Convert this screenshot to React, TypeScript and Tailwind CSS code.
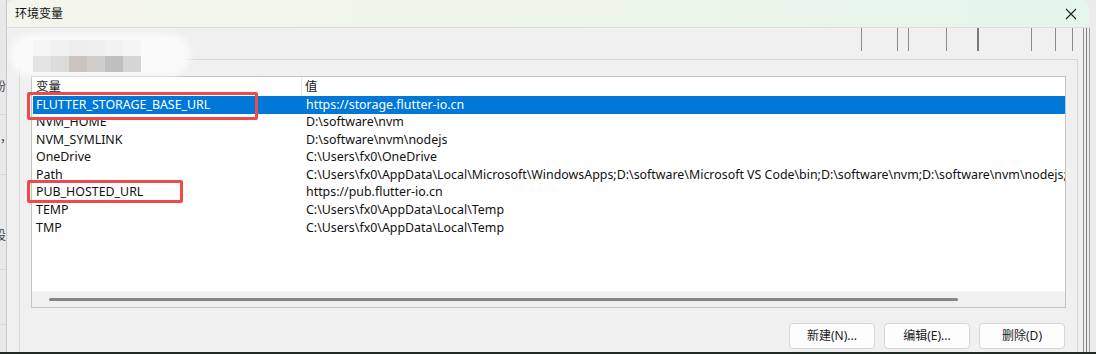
const rows = [
  { name: "FLUTTER_STORAGE_BASE_URL", value: "https://storage.flutter-io.cn", selected: true },
  { name: "NVM_HOME", value: "D:\\software\\nvm" },
  { name: "NVM_SYMLINK", value: "D:\\software\\nvm\\nodejs" },
  { name: "OneDrive", value: "C:\\Users\\fx0\\OneDrive" },
  {
    name: "Path",
    value:
      "C:\\Users\\fx0\\AppData\\Local\\Microsoft\\WindowsApps;D:\\software\\Microsoft VS Code\\bin;D:\\software\\nvm;D:\\software\\nvm\\nodejs;D:\\software\\flutter\\bin",
  },
  { name: "PUB_HOSTED_URL", value: "https://pub.flutter-io.cn" },
  { name: "TEMP", value: "C:\\Users\\fx0\\AppData\\Local\\Temp" },
  { name: "TMP", value: "C:\\Users\\fx0\\AppData\\Local\\Temp" },
];

const mosaic = [
  ["#f6f6f6", "#f1f1f1", "#eeeeee", "#efefef", "#f2f2f2", "#f5f5f5"],
  ["#e4e4e4", "#dcdcdc", "#cbc4c0", "#d1cdcb", "#bfbfc0", "#d6d6d8"],
];

function Button({ label }: { label: string }) {
  return (
    <button className="w-[86px] h-[26px] rounded-[4px] border border-[#d6d6d6] bg-[#fdfdfd] text-[12px] text-[#1b1b1b] flex items-center justify-center">
      {label}
    </button>
  );
}

export default function App() {
  return (
    <div
      className="w-[1096px] h-[354px] overflow-hidden bg-[#ebebeb] flex flex-col relative text-black"
      style={{ fontFamily: '"Noto Sans", "Noto Sans CJK SC", sans-serif' }}
    >
      <div className="flex flex-1 min-h-0">
        {/* background window on the left */}
        <div className="w-[7px] shrink-0 bg-[#e8e8e8] flex flex-col overflow-hidden border-r border-[#c9c9c9]">
          <div className="h-[115px] border-b border-[#d8d8d8] relative">
            <span className="absolute left-[-6px] top-[78px] text-[12px] text-[#444]">纷</span>
          </div>
          <div className="h-[60px] border-b border-[#d8d8d8] relative">
            <span className="absolute left-[0px] top-[14px] text-[12px] text-[#444]">，</span>
          </div>
          <div className="h-[95px] border-b border-[#d8d8d8] relative">
            <span className="absolute left-[-6px] top-[52px] text-[12px] text-[#444]">设</span>
          </div>
          <div className="h-[55px] border-b border-[#d8d8d8]" />
        </div>

        {/* dialog */}
        <div className="w-[1082px] shrink-0 flex flex-col rounded-t-[8px] overflow-hidden bg-[#f0f0f0]">
          <div className="h-[28px] shrink-0 flex items-center justify-between pl-[8px] pr-[10px] bg-gradient-to-r from-[#f4f5ee] via-[#eef5ea] to-[#e5f6ec] border-b border-[#dcdcdc]">
            <span className="text-[12px] text-[#111]">环境变量</span>
            <svg width="12" height="12" viewBox="0 0 12 12" className="mr-[2px]">
              <path d="M1 1L11 11M11 1L1 11" stroke="#222" strokeWidth="1.1" fill="none" />
            </svg>
          </div>

          <div className="flex flex-1 min-h-0">
            <div className="w-[1071px] shrink-0 flex flex-col relative">
              {/* remnants of upper table */}
              <div className="h-[31px] shrink-0 flex items-start pl-[854px]">
                <div className="w-px h-[23px] bg-[#8c8c8c]" />
                <div className="w-px h-[23px] bg-[#8c8c8c] ml-[35px]" />
                <div className="w-px h-[23px] bg-[#8c8c8c] ml-[10px]" />
                <div className="w-px h-[23px] bg-[#8c8c8c] ml-[37px]" />
                <div className="w-[2px] h-[23px] bg-[#7a7a7a] ml-[30px]" />
                <div className="w-px h-[23px] bg-[#8c8c8c] ml-[52px]" />
                <div className="w-px h-[23px] bg-[#8c8c8c] ml-[23px]" />
                <div className="w-px h-[23px] bg-[#8c8c8c] ml-[16px]" />
              </div>

              {/* group box */}
              <div className="flex-1 ml-[12px] border-t border-r border-l border-[#dadada] pt-[16px] pl-[11px] pr-[11px] flex flex-col">
                <div className="h-[232px] border border-[#c4c4c4] bg-white flex flex-col overflow-hidden">
                  <div className="h-[19px] shrink-0 flex text-[12.4px] text-[#222] leading-[19px]">
                    <div className="w-[270px] pl-[4px] border-r border-[#e5e5e5]">变量</div>
                    <div className="pl-[3px]">值</div>
                  </div>
                  <div className="flex-1 flex flex-col">
                    {rows.map((r) => (
                      <div
                        key={r.name}
                        className={
                          r.selected
                            ? "h-[17.6px] flex items-center text-[12.4px] whitespace-nowrap bg-[#0078d7] text-white ml-px"
                            : "h-[17.6px] flex items-center text-[12.4px] whitespace-nowrap text-[#111]"
                        }
                      >
                        <div className={r.selected ? "w-[269px] pl-[3px] shrink-0" : "w-[270px] pl-[4px] shrink-0"}>{r.name}</div>
                        <div className="pl-[4px] overflow-hidden">{r.value}</div>
                      </div>
                    ))}
                  </div>
                  <div className="h-[16px] shrink-0 bg-[#f0f0f0] flex items-center pl-[17px]">
                    <div className="w-[909px] h-[3px] rounded-full bg-[#868686]" />
                  </div>
                </div>

                <div className="flex justify-end gap-[9px] mt-[15px] mr-[1px]">
                  <Button label="新建(N)..." />
                  <Button label="编辑(E)..." />
                  <Button label="删除(D)" />
                </div>
              </div>

              {/* redacted (mosaic) area */}
              <div className="absolute left-[3px] top-[6px] w-[180px] h-[42px] rounded-[20px] bg-[#fafafa] blur-[3px]" />
              <div className="absolute left-[26px] top-[12px] flex flex-col blur-[0.5px]">
                {mosaic.map((line, i) => (
                  <div key={i} className="flex">
                    {line.map((c, j) => (
                      <div key={j} className="w-[18px] h-[16px]" style={{ backgroundColor: c }} />
                    ))}
                  </div>
                ))}
              </div>

              {/* annotations */}
              <div className="absolute left-[20px] top-[64px] w-[231px] h-[28px] border-[3px] border-[#ef4a4a] rounded-[2px]" />
              <div className="absolute left-[20px] top-[152px] w-[156px] h-[23px] border-[3px] border-[#ef4a4a] rounded-[2px]" />
            </div>

            {/* window right edge */}
            <div className="flex-1 flex">
              <div className="w-[5px]" />
              <div className="w-px bg-[#8f8f8f]" />
              <div className="w-[2px]" />
              <div className="w-px bg-[#7f7f7f]" />
              <div className="flex-1" />
            </div>
          </div>
        </div>

        <div className="flex-1 bg-[#ececec] flex">
          <div className="w-px bg-[#9a9a9a] mt-[28px]" />
        </div>
      </div>
      <div className="h-[2px] shrink-0 bg-[#1e2b24]" />
    </div>
  );
}
